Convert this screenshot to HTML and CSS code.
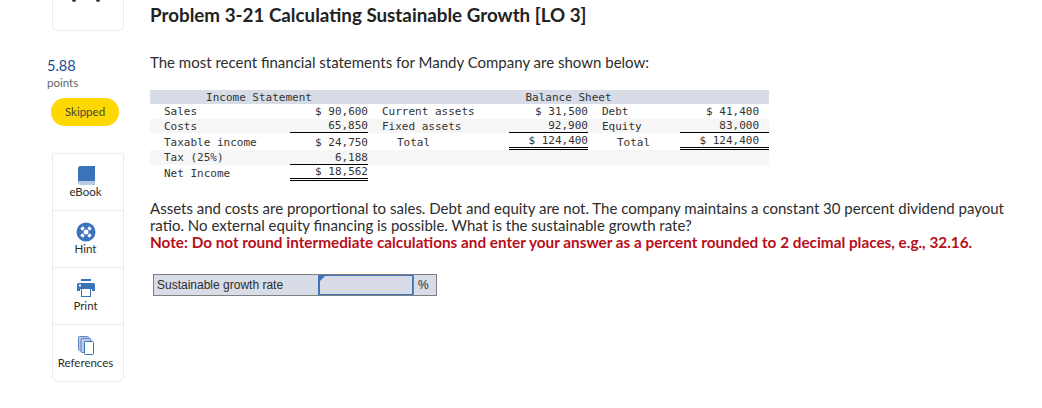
FILE: index.html

```html
<!DOCTYPE html>
<html>
<head>
    <meta charset="utf-8">
    <title>Problem 3-21</title>
    <link rel="stylesheet" href="styles.css">
</head>
<body>
    <div class="page">
        <div class="side">
            <div class="top-box">
                <span class="dot"></span>
                <span class="dot"></span>
            </div>
            <div class="points">
                <div class="score">5.88</div>
                <div class="points-label">points</div>
            </div>
            <div class="badge">Skipped</div>
            <div class="tools">
                <div class="tool">
                    <svg class="icon" width="20" height="20" viewBox="0 0 20 20">
                        <path d="M2 3.500A2.500 2.500 0 0 1 4.500 1H19v15H4.500C3 16 2 16.600 2 17.500z" fill="#3b73ba"/>
                        <path d="M2 17.500C2 16.600 3 16 4.500 16H19v4H4.500C3 20 2 19 2 17.500z" fill="#b9cbe6"/>
                    </svg>
                    <div>eBook</div>
                </div>
                <div class="tool">
                    <svg class="icon" width="20" height="20" viewBox="0 0 20 20">
                        <circle cx="10" cy="10" r="9.500" fill="#3b73ba"/>
                        <path d="M5.500 5.500l2 2M14.500 5.500l-2 2M5.500 14.500l2-2M14.500 14.500l-2-2" stroke="#fff" stroke-width="3.500"/>
                        <circle cx="10" cy="10" r="2.500" fill="#fff"/>
                    </svg>
                    <div>Hint</div>
                </div>
                <div class="tool">
                    <svg class="icon" width="20" height="20" viewBox="0 0 20 20">
                        <rect x="5" y="0" width="10" height="2" fill="#3b73ba"/>
                        <path d="M1 5.500A1.500 1.500 0 0 1 2.500 4h15A1.500 1.500 0 0 1 19 5.500V12h-3V10H4v2H1z" fill="#3b73ba"/>
                        <rect x="3" y="5.500" width="2" height="2" fill="#fff"/>
                        <rect x="5.500" y="9.500" width="9" height="8" fill="#fff" stroke="#3b73ba"/>
                    </svg>
                    <div>Print</div>
                </div>
                <div class="tool">
                    <svg class="icon" width="20" height="20" viewBox="0 0 20 20">
                        <rect x="2.500" y="0.500" width="10" height="14" rx="1" fill="#b9cbe6" stroke="#5f87c2"/>
                        <rect x="5" y="2.500" width="10" height="14" rx="1" fill="#b9cbe6" stroke="#5f87c2"/>
                        <rect x="8.500" y="5.500" width="9" height="13" rx="1" fill="#fff" stroke="#3b73ba"/>
                    </svg>
                    <div>References</div>
                </div>
            </div>
        </div>
        <div class="main">
            <h1 class="title">Problem 3-21 Calculating Sustainable Growth [LO 3]</h1>
            <p class="intro">The most recent financial statements for Mandy Company are shown below:</p>
            <table class="statements">
                <colgroup>
                    <col class="col-a">
                    <col class="col-b">
                    <col class="col-c">
                    <col class="col-d">
                    <col class="col-e">
                    <col class="col-f">
                </colgroup>
                <tr class="head">
                    <td colspan="2">Income Statement</td>
                    <td colspan="4">Balance Sheet</td>
                </tr>
                <tr class="row-a">
                    <td class="lbl">Sales</td>
                    <td class="num">$ 90,600</td>
                    <td class="lbl">Current assets</td>
                    <td class="num">$ 31,500</td>
                    <td class="lbl">Debt</td>
                    <td class="num end">$ 41,400</td>
                </tr>
                <tr class="alt row-b">
                    <td class="lbl">Costs</td>
                    <td class="num under">65,850</td>
                    <td class="lbl">Fixed assets</td>
                    <td class="num under">92,900</td>
                    <td class="lbl">Equity</td>
                    <td class="num end under">83,000</td>
                </tr>
                <tr class="row-c">
                    <td class="lbl">Taxable income</td>
                    <td class="num">$ 24,750</td>
                    <td class="lbl indent">Total</td>
                    <td class="num double">$ 124,400</td>
                    <td class="lbl indent">Total</td>
                    <td class="num end double">$ 124,400</td>
                </tr>
                <tr class="alt row-a">
                    <td class="lbl">Tax (25%)</td>
                    <td class="num under">6,188</td>
                    <td colspan="4"></td>
                </tr>
                <tr class="row-d">
                    <td class="lbl">Net Income</td>
                    <td class="num double">$ 18,562</td>
                    <td colspan="4"></td>
                </tr>
            </table>
            <p class="question">Assets and costs are proportional to sales. Debt and equity are not. The company maintains a constant 30 percent dividend payout ratio. No external equity financing is possible. What is the sustainable growth rate?</p>
            <p class="note">Note: Do not round intermediate calculations and enter your answer as a percent rounded to 2 decimal places, e.g., 32.16.</p>
            <div class="answer">
                <div class="answer-label">Sustainable growth rate</div>
                <div class="answer-input"><span class="corner"></span></div>
                <div class="answer-unit">%</div>
            </div>
        </div>
    </div>
</body>
</html>
```

FILE: styles.css

```css
html,
body {
    margin: 0;
    height: 100%;
    overflow: hidden;
    background: #fff;
}
.page {
    display: flex;
    font-family: Lato, "Open Sans", sans-serif;
    color: #2d2d2d;
}
.side {
    width: 72px;
    margin-left: 52px;
    flex: none;
}
.top-box {
    height: 31px;
    box-sizing: border-box;
    border: 1px solid #ebebeb;
    border-top: 0;
    border-radius: 0 0 6px 6px;
    display: flex;
    justify-content: center;
    gap: 20px;
    padding-right: 5px;
}
.dot {
    width: 4px;
    height: 2px;
    border-radius: 0 0 2px 2px;
    background: #333;
}
.points {
    margin: 27px 0 0 -5px;
}
.score {
    font-size: 14.500px;
    line-height: 16px;
    color: #1f4f96;
}
.points-label {
    font-size: 11.500px;
    line-height: 16px;
    margin-top: 1px;
    color: #666;
}
.badge {
    width: 68px;
    height: 28px;
    margin: 7px 0 0 -1px;
    border-radius: 14px;
    background: #ffd800;
    font-size: 11.500px;
    line-height: 28px;
    text-align: center;
    color: #444;
}
.tools {
    margin-top: 27px;
    border: 1px solid #ebebeb;
    border-radius: 0 0 6px 6px;
}
.tool {
    height: 45px;
    padding: 11px 5px 0 0;
    border-bottom: 1px solid #ebebeb;
    text-align: center;
    font-size: 11.500px;
    line-height: 14px;
}
.tool:last-child {
    border-bottom: 0;
}
.icon {
    display: block;
    margin: 0 auto;
}
.main {
    margin-left: 26px;
    width: 860px;
}
.title {
    margin: 4px 0 0;
    font-size: 18.800px;
    line-height: 22px;
    font-weight: 700;
    color: #222;
}
.intro {
    margin: 27px 0 0;
    font-size: 15px;
    line-height: 18px;
}
.statements {
    margin-top: 19px;
    width: 619px;
    table-layout: fixed;
    border-collapse: separate;
    border-spacing: 0;
    font-family: "DejaVu Sans Mono", monospace;
    font-size: 11px;
    color: #333;
}
.col-a { width: 140px; }
.col-b { width: 78px; }
.col-c { width: 141px; }
.col-d { width: 79px; }
.col-e { width: 92px; }
.col-f { width: 89px; }
.statements td {
    box-sizing: border-box;
    padding: 0;
    line-height: 13px;
    white-space: pre;
}
.head td {
    height: 14px;
    background: #d7dce7;
    text-align: center;
}
.row-a td { height: 15px; }
.row-b td { height: 14px; }
.row-c td { height: 17px; }
.row-d td { height: 16px; }
.alt td {
    background: #f6f6f6;
}
.statements .row-c td,
.statements .row-d td {
    padding-top: 1px;
}
.statements td.lbl {
    padding-left: 14px;
}
.statements td.indent {
    padding-left: 29px;
}
.statements td.num {
    text-align: right;
}
.statements td.end {
    padding-right: 10px;
}
.statements td.under {
    border-bottom: 1px solid #000;
}
.statements .row-c td.double,
.statements .row-d td.double {
    padding-top: 0;
    border-bottom: 3px double #000;
}
.question {
    margin: 19px 0 0;
    font-size: 15px;
    line-height: 17px;
}
.note {
    margin: 0;
    font-size: 15.300px;
    line-height: 16px;
    font-weight: 700;
    color: #b80f1a;
}
.answer {
    display: flex;
    margin: 24px 0 0 3px;
    width: 284px;
    height: 22px;
    box-sizing: border-box;
    border: 1px solid #808080;
    background: #d7dce7;
    font-family: "Liberation Sans", sans-serif;
    font-size: 12px;
    line-height: 20px;
}
.answer-label {
    width: 164px;
    padding-left: 3px;
    box-sizing: border-box;
}
.answer-input {
    position: relative;
    width: 95px;
    box-sizing: border-box;
    border: 1px solid #3f74b8;
    border-left-width: 2px;
}
.corner {
    position: absolute;
    top: 0;
    left: 0;
    border-top: 5px solid #3b73ba;
    border-right: 5px solid transparent;
}
.answer-unit {
    padding-left: 4px;
    border-left: 1px solid #808080;
}
```
